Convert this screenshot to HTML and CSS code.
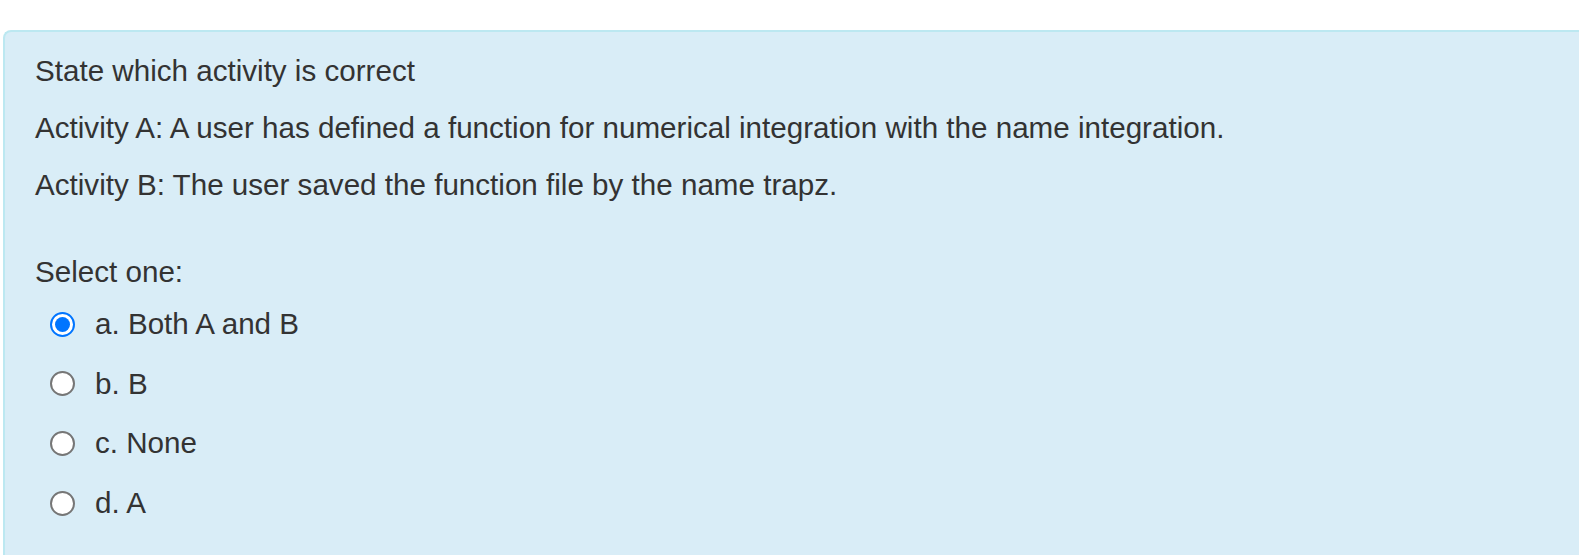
FILE: index.html
```html
<!DOCTYPE html>
<html>
<head>
<meta charset="utf-8">
<link rel="stylesheet" href="styles.css">
</head>
<body>
<div class="formulation">
  <div class="qtext">
    <p>State which activity is correct</p>
    <p>Activity A: A user has defined a function for numerical integration with the name integration.</p>
    <p>Activity B: The user saved the function file by the name trapz.</p>
  </div>
  <div class="prompt">Select one:</div>
  <div class="answer">
    <label class="opt"><span class="radio checked"></span><span class="label">a. Both A and B</span></label>
    <label class="opt"><span class="radio"></span><span class="label">b. B</span></label>
    <label class="opt"><span class="radio"></span><span class="label">c. None</span></label>
    <label class="opt"><span class="radio"></span><span class="label">d. A</span></label>
  </div>
</div>
</body>
</html>
```

FILE: styles.css
```css
html, body {
  margin: 0;
  padding: 0;
  background: #ffffff;
}
body {
  height: 555px;
  padding: 30px 0 0 3px;
  box-sizing: border-box;
  font-family: "Liberation Sans", Arial, sans-serif;
  font-size: 29.6px;
  color: #333333;
  overflow: hidden;
}
.formulation {
  box-sizing: border-box;
  height: 525px;
  background: #d9edf7;
  border: 2px solid #bce8f1;
  border-right: none;
  border-bottom: none;
  border-radius: 8px 0 0 0;
  padding: 21px 0 0 30px;
}
.qtext p {
  margin: 0 0 22px 0;
  line-height: 35px;
}
.prompt {
  margin-top: 52px;
  line-height: 35px;
}
.answer {
  display: flex;
  flex-direction: column;
  padding-left: 15px;
  margin-top: 17px;
  gap: 23.7px;
}
.opt {
  display: flex;
  align-items: center;
  height: 36px;
}
.radio {
  width: 21px;
  height: 21px;
  border: 2px solid #767676;
  border-radius: 50%;
  background: #ffffff;
  box-sizing: content-box;
  flex: none;
  margin-right: 20px;
  position: relative;
}
.radio.checked {
  border-color: #0075ff;
}
.radio.checked::after {
  content: "";
  position: absolute;
  left: 3px;
  top: 3px;
  width: 15px;
  height: 15px;
  border-radius: 50%;
  background: #0075ff;
}
```
